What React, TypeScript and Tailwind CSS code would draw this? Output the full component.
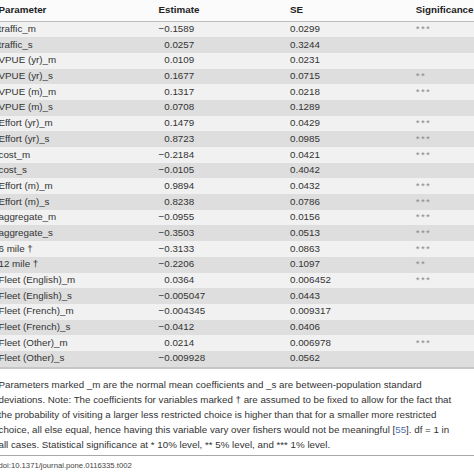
import React from "react";

type Row = [string, string, string, string];

const rows: Row[] = [
  ["traffic_m", "−0.1589", "0.0299", "***"],
  ["traffic_s", "0.0257", "0.3244", ""],
  ["VPUE (yr)_m", "0.0109", "0.0231", ""],
  ["VPUE (yr)_s", "0.1677", "0.0715", "**"],
  ["VPUE (m)_m", "0.1317", "0.0218", "***"],
  ["VPUE (m)_s", "0.0708", "0.1289", ""],
  ["Effort (yr)_m", "0.1479", "0.0429", "***"],
  ["Effort (yr)_s", "0.8723", "0.0985", "***"],
  ["cost_m", "−0.2184", "0.0421", "***"],
  ["cost_s", "−0.0105", "0.4042", ""],
  ["Effort (m)_m", "0.9894", "0.0432", "***"],
  ["Effort (m)_s", "0.8238", "0.0786", "***"],
  ["aggregate_m", "−0.0955", "0.0156", "***"],
  ["aggregate_s", "−0.3503", "0.0513", "***"],
  ["6 mile †", "−0.3133", "0.0863", "***"],
  ["12 mile †", "−0.2206", "0.1097", "**"],
  ["Fleet (English)_m", "0.0364", "0.006452", "***"],
  ["Fleet (English)_s", "−0.005047", "0.0443", ""],
  ["Fleet (French)_m", "−0.004345", "0.009317", ""],
  ["Fleet (French)_s", "−0.0412", "0.0406", ""],
  ["Fleet (Other)_m", "0.0214", "0.006978", "***"],
  ["Fleet (Other)_s", "−0.009928", "0.0562", ""],
];

function Est({ v }: { v: string }) {
  if (v.startsWith("−")) return <span>{v}</span>;
  return (
    <span>
      <span className="invisible">−</span>
      {v}
    </span>
  );
}

export default function App() {
  return (
    <div
      className="w-[474px] h-[474px] overflow-hidden bg-white text-[#333]"
      style={{ fontFamily: '"Liberation Sans", Arial, sans-serif' }}
    >
      <div className="ml-[-1.5px] w-[480px]">
        <div className="grid grid-cols-[160px_131.5px_125.8px_1fr] h-[21.5px] items-center bg-[#fbfbfb] border-b border-[#bdbdbd] text-[9.8px] font-bold text-[#222] whitespace-nowrap">
          <div>Parameter</div>
          <div>Estimate</div>
          <div>SE</div>
          <div>Significance</div>
        </div>
        <div className="border-b-2 border-[#c6c6c6]">
          {rows.map((r, i) => (
            <div
              key={i}
              className={
                "grid grid-cols-[160px_131.5px_125.8px_1fr] h-[15.7px] items-center text-[9.8px] whitespace-nowrap " +
                (i % 2 === 0 ? "bg-[#f1f1f1]" : "bg-[#dedede]")
              }
            >
              <div>{r[0]}</div>
              <div>
                <Est v={r[1]} />
              </div>
              <div>{r[2]}</div>
              <div className="text-[#8a8a8a] tracking-[1.3px]">{r[3]}</div>
            </div>
          ))}
        </div>
        <div className="mt-[8.8px] text-[9.75px] leading-[15px] text-[#333] whitespace-nowrap">
          <div>Parameters marked _m are the normal mean coefficients and _s are between-population standard</div>
          <div>deviations. Note: The coefficients for variables marked † are assumed to be fixed to allow for the fact that</div>
          <div>the probability of visiting a larger less restricted choice is higher than that for a smaller more restricted</div>
          <div>
            choice, all else equal, hence having this variable vary over fishers would not be meaningful [
            <span className="text-[#4a6fb5]">55</span>]. df = 1 in
          </div>
          <div>all cases. Statistical significance at * 10% level, ** 5% level, and *** 1% level.</div>
        </div>
        <div className="mt-[2.5px] border-t border-[#a8a8a8]" />
        <div className="mt-[5.5px] text-[7.7px] leading-[10px] text-[#444] whitespace-nowrap">
          doi:10.1371/journal.pone.0116335.t002
        </div>
      </div>
    </div>
  );
}
